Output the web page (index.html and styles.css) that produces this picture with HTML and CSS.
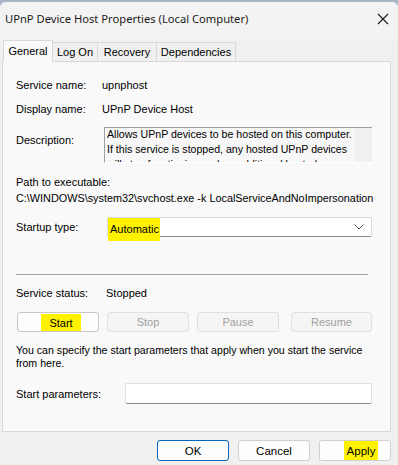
FILE: index.html
```html
<!DOCTYPE html>
<html>
<head>
<meta charset="utf-8">
<link rel="stylesheet" href="styles.css">
</head>
<body>
<div class="window">
  <div class="titlebar">
    <span class="title">UPnP Device Host Properties (Local Computer)</span>
    <svg class="close" width="12" height="12" viewBox="0 0 12 12"><path d="M1 1 L11 11 M11 1 L1 11" stroke="#1a1a1a" stroke-width="1.1" fill="none"/></svg>
  </div>
  <div class="tabs">
    <div class="tab active">General</div>
    <div class="tab t-logon">Log On</div>
    <div class="tab t-rec">Recovery</div>
    <div class="tab t-dep">Dependencies</div>
  </div>
  <div class="panel">
    <div class="row r-name"><span class="label">Service name:</span><span class="value">upnphost</span></div>
    <div class="row r-display"><span class="label">Display name:</span><span class="value">UPnP Device Host</span></div>
    <div class="row r-desc">
      <span class="label">Description:</span>
      <div class="descbox">
        <div class="desctext">Allows UPnP devices to be hosted on this computer. If this service is stopped, any hosted UPnP devices will stop functioning and no additional hosted</div>
        <div class="scroll"></div>
      </div>
    </div>
    <div class="path-label">Path to executable:</div>
    <div class="path-value">C:\WINDOWS\system32\svchost.exe -k LocalServiceAndNoImpersonation</div>
    <div class="row r-startup">
      <span class="label">Startup type:</span>
      <div class="select">
        <span class="mark">Automatic</span>
        <svg class="chev" width="10" height="6" viewBox="0 0 10 6"><path d="M0.5 0.5 L5 5 L9.5 0.5" stroke="#555" stroke-width="1" fill="none"/></svg>
      </div>
    </div>
    <div class="sep"></div>
    <div class="row r-status"><span class="label">Service status:</span><span class="value">Stopped</span></div>
    <div class="btnrow">
      <div class="btn enabled"><span class="mark">Start</span></div>
      <div class="btn disabled">Stop</div>
      <div class="btn disabled">Pause</div>
      <div class="btn disabled b-resume">Resume</div>
    </div>
    <p class="note">You can specify the start parameters that apply when you start the service from here.</p>
    <div class="row r-params">
      <span class="label">Start parameters:</span>
      <div class="input"></div>
    </div>
  </div>
  <div class="footer">
    <div class="fbtn ok">OK</div>
    <div class="fbtn">Cancel</div>
    <div class="fbtn"><span class="mark">Apply</span></div>
  </div>
</div>
</body>
</html>
```

FILE: styles.css
```css
* { box-sizing: border-box; }
html, body { margin: 0; padding: 0; }
body {
  width: 398px;
  height: 465px;
  overflow: hidden;
  background: #a7b6c6;
  font-family: "Liberation Sans", Arial, sans-serif;
  font-size: 11px;
  line-height: 14px;
  color: #000;
}
.window {
  margin-top: 2px;
  height: 463px;
  background: #f0f0f0;
  border-top-left-radius: 6px;
  border-top-right-radius: 6px;
  display: flex;
  flex-direction: column;
}
.window > * { flex: none; }
.titlebar {
  height: 38px;
  display: flex;
  align-items: center;
  justify-content: space-between;
  padding: 0 9px 4px 5px;
  background: #f3f3f3;
  border-top-left-radius: 6px;
  border-top-right-radius: 6px;
}
.title {
  font-family: "Noto Sans", "Open Sans", sans-serif;
  font-size: 11.2px;
  color: #1a1a1a;
}
.tabs {
  display: flex;
  align-items: flex-end;
  height: 21px;
  padding-left: 3px;
  position: relative;
  z-index: 1;
}
.tab {
  height: 19px;
  border: 1px solid #d9d9d9;
  border-bottom: none;
  background: #f0f0f0;
  display: flex;
  align-items: center;
  justify-content: center;
  font-size: 11px;
}
.tab.active {
  width: 50px;
  height: 22px;
  background: #f9f9f9;
  margin-bottom: -1px;
  padding-bottom: 2px;
}
.t-logon { width: 45px; border-left: none; }
.t-rec { width: 59px; border-left: none; }
.t-dep { width: 79px; border-left: none; }
.panel {
  margin: 0 7px 0 2px;
  height: 371px;
  border: 1px solid #d9d9d9;
  background: #f9f9f9;
  padding: 16px 0 0 13px;
  display: flex;
  flex-direction: column;
}
.panel > * { flex: none; }
.row {
  display: flex;
  align-items: center;
}
.label { width: 86px; flex: none; }
.r-name { height: 14px; margin-bottom: 10px; }
.r-display { height: 14px; }
.r-desc { align-items: flex-start; margin-top: 11px; }
.r-desc .label { margin-top: 6px; width: 88px; }
.descbox {
  width: 268px;
  height: 36px;
  display: flex;
  border-top: 1px solid #a0a0a0;
  border-left: 1px solid #a0a0a0;
  border-bottom: 1px solid #fff;
  background: #f7f7f7;
  overflow: hidden;
}
.desctext {
  flex: 1;
  padding: 0 0 0 2px;
  line-height: 15px;
  font-size: 10.6px;
  overflow: hidden;
  margin-top: -1px;
}
.scroll { width: 17px; background: #f0f0f0; flex: none; }
.path-label { margin-top: 12px; height: 14px; }
.path-value { margin-top: 2px; height: 14px; white-space: nowrap; font-size: 10.85px; }
.r-startup { margin-top: 12px; }
.r-startup .label { width: 91px; }
.select {
  width: 265px;
  height: 20px;
  background: #fff;
  border: 1px solid #d9d9d9;
  border-bottom-color: #8a8a8a;
  border-radius: 2px;
  display: flex;
  align-items: center;
  justify-content: space-between;
  padding-right: 7px;
}
.select .mark {
  padding: 4px 1px 5px 2px;
  margin-top: 4px;
}
.mark { background: #fff200; }
.sep {
  margin-top: 37px;
  width: 352px;
  height: 1px;
  background: #a0a0a0;
}
.r-status { margin-top: 11px; height: 14px; }
.r-status .label { width: 90px; }
.btnrow {
  display: flex;
  margin-top: 12px;
  margin-left: 1px;
  gap: 8px;
}
.btn {
  width: 82px;
  height: 20px;
  border: 1px solid #d0d0d0;
  border-radius: 3px;
  display: flex;
  align-items: center;
  justify-content: center;
  font-size: 11px;
}
.btn.enabled { background: #fdfdfd; border-color: #c8c8c8; }
.btn.enabled .mark { padding: 2px 8px 1px 8px; margin-left: 6px; }
.btn.disabled { background: #f5f5f5; color: #a0a0a0; border-color: #e0e0e0; }
.b-resume { margin-left: 4px; width: 81px; }
.note {
  margin: 12px 0 0 0;
  width: 360px;
  line-height: 13px;
  font-size: 10.6px;
}
.r-params { margin-top: 13px; }
.r-params .label { width: 109px; }
.input {
  width: 247px;
  height: 21px;
  background: #fff;
  border: 1px solid #e0e0e0;
  border-bottom-color: #8a8a8a;
  border-radius: 2px;
}
.footer {
  display: flex;
  justify-content: flex-end;
  gap: 9px;
  padding: 8px 7px 0 0;
}
.fbtn {
  width: 72px;
  height: 21px;
  border: 1px solid #d0d0d0;
  border-radius: 3px;
  background: #fdfdfd;
  display: flex;
  align-items: center;
  justify-content: center;
  font-size: 11.5px;
}
.fbtn.ok { border: 1.5px solid #0067c0; }
.fbtn .mark { padding: 3px 3px 2px 3px; margin-left: 12px; }
```
